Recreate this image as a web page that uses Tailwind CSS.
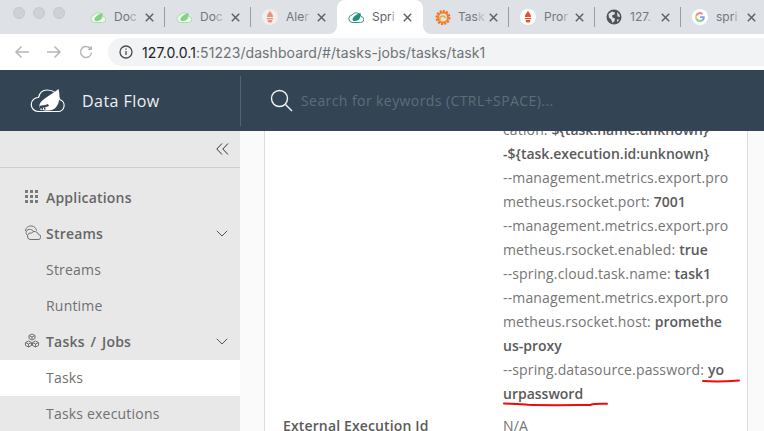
<!DOCTYPE html>
<html lang="en">
<head>
<meta charset="UTF-8" />
<title>Spring Cloud Data Flow</title>
<script src="https://cdn.jsdelivr.net/npm/@tailwindcss/browser@4"></script>
</head>
<body class="w-[764px] h-[431px] overflow-hidden bg-white font-['Open_Sans',sans-serif]">
  <!-- browser tabs -->
  <div class="h-[34px] bg-[#dee1e6] flex">
    <div class="w-[79px] flex items-center gap-[8px] pl-[13px] pb-[8px]">
      <span class="w-[12px] h-[12px] rounded-full bg-[#cfd1d4] border border-[#c6c8cb]"></span>
      <span class="w-[12px] h-[12px] rounded-full bg-[#cfd1d4] border border-[#c6c8cb]"></span>
      <span class="w-[12px] h-[12px] rounded-full bg-[#cfd1d4] border border-[#c6c8cb]"></span>
    </div>

    <div class="w-[86px] flex items-center pl-[11px] relative font-['Inter',sans-serif] text-[12px] text-[#75777b]">
      <svg class="w-[16px] h-[14px] mr-[8px] shrink-0" viewBox="0 0 16 14"><path d="M4 12.500h8.500a3 3 0 0 0 .5-6 5 5 0 0 0-9-1.500 3.800 3.800 0 0 0 0 7.500z" fill="#eef5ee" stroke="#a9dfa9" stroke-width="1"/><path d="M4.500 10c0-3.500 3.500-5.500 8-7 .5 4-1 8-5.500 8-1 0-2.500-.3-2.500-1z" fill="#86d086"/></svg>
      <span>Do<span class="text-[#a9abae]">c</span></span>
      <svg class="absolute left-[66px] top-[13px] w-[9px] h-[9px]" viewBox="0 0 9 9" stroke="#5f6368" stroke-width="1.500"><path d="M.8.800l7.400 7.400M8.200.800L.8 8.200"/></svg>
      <span class="absolute right-0 top-[7px] h-[20px] w-px bg-[#9a9da1]"></span>
    </div>
    <div class="w-[86px] flex items-center pl-[11px] relative font-['Inter',sans-serif] text-[12px] text-[#75777b]">
      <svg class="w-[16px] h-[14px] mr-[8px] shrink-0" viewBox="0 0 16 14"><path d="M4 12.500h8.500a3 3 0 0 0 .5-6 5 5 0 0 0-9-1.500 3.800 3.800 0 0 0 0 7.500z" fill="#eef5ee" stroke="#a9dfa9" stroke-width="1"/><path d="M4.500 10c0-3.500 3.500-5.500 8-7 .5 4-1 8-5.500 8-1 0-2.500-.3-2.500-1z" fill="#86d086"/></svg>
      <span>Do<span class="text-[#a9abae]">c</span></span>
      <svg class="absolute left-[66px] top-[13px] w-[9px] h-[9px]" viewBox="0 0 9 9" stroke="#5f6368" stroke-width="1.500"><path d="M.8.800l7.400 7.400M8.200.800L.8 8.200"/></svg>
      <span class="absolute right-0 top-[7px] h-[20px] w-px bg-[#9a9da1]"></span>
    </div>
    <div class="w-[86px] flex items-center pl-[11px] relative font-['Inter',sans-serif] text-[12px] text-[#75777b]">
      <svg class="w-[16px] h-[16px] mr-[8px] shrink-0" viewBox="0 0 16 16"><circle cx="8" cy="8" r="8" fill="#f1eeec"/><path d="M8 1.500c.3 2 3 3 3 6.500H5c0-3.500 2.700-4.500 3-6.500zM4.800 9h6.400v1.200H4.800zM5.500 11h5l-1 2.500h-3z" fill="#e8917c"/></svg>
      <span>Ale<span class="text-[#a9abae]">r</span></span>
      <svg class="absolute left-[66px] top-[13px] w-[9px] h-[9px]" viewBox="0 0 9 9" stroke="#5f6368" stroke-width="1.500"><path d="M.8.800l7.400 7.400M8.200.800L.8 8.200"/></svg>
    </div>
    <div class="w-[86px] flex items-center pl-[11px] relative font-['Inter',sans-serif] text-[12px] text-[#5f6368] bg-white rounded-t-[8px]">
      <span class="absolute left-[-8px] bottom-0 w-[8px] h-[8px] bg-white"><span class="block w-full h-full bg-[#dee1e6] rounded-br-[8px]"></span></span>
      <span class="absolute right-[-8px] bottom-0 w-[8px] h-[8px] bg-white"><span class="block w-full h-full bg-[#dee1e6] rounded-bl-[8px]"></span></span>
      <svg class="w-[16px] h-[14px] mr-[8px] shrink-0" viewBox="0 0 16 14"><path d="M4 12.500h8.500a3 3 0 0 0 .5-6 5 5 0 0 0-9-1.500 3.800 3.800 0 0 0 0 7.500z" fill="#fff" stroke="#2f9c8c" stroke-width="1"/><path d="M4.500 10c0-3.500 3.500-5.500 8-7 .5 4-1 8-5.500 8-1 0-2.500-.3-2.500-1z" fill="#1f8f7f"/></svg>
      <span>Spr<span class="text-[#a9abae]">i</span></span>
      <svg class="absolute left-[66px] top-[13px] w-[9px] h-[9px]" viewBox="0 0 9 9" stroke="#5f6368" stroke-width="1.500"><path d="M.8.800l7.400 7.400M8.200.800L.8 8.200"/></svg>
    </div>
    <div class="w-[86px] flex items-center pl-[12px] relative font-['Inter',sans-serif] text-[12px] text-[#75777b]">
      <svg class="w-[16px] h-[16px] mr-[7px] shrink-0" viewBox="0 0 16 16" fill="none"><circle cx="8" cy="8.500" r="6.300" stroke="#ee6f2c" stroke-width="2.400" stroke-dasharray="2 1.200"/><circle cx="8" cy="8.500" r="5" stroke="#f0822c" stroke-width="2"/><path d="M6 12.500a3 3 0 1 1 4.500-3.500" stroke="#f5a623" stroke-width="1.500"/></svg>
      <span>Tas<span class="text-[#b9bbbe]">k</span></span>
      <svg class="absolute left-[66px] top-[13px] w-[9px] h-[9px]" viewBox="0 0 9 9" stroke="#5f6368" stroke-width="1.500"><path d="M.8.800l7.400 7.400M8.200.800L.8 8.200"/></svg>
      <span class="absolute right-0 top-[7px] h-[20px] w-px bg-[#9a9da1]"></span>
    </div>
    <div class="w-[86px] flex items-center pl-[11px] relative font-['Inter',sans-serif] text-[12px] text-[#75777b]">
      <svg class="w-[16px] h-[16px] mr-[8px] shrink-0" viewBox="0 0 16 16"><circle cx="8" cy="8" r="8" fill="#fff"/><path d="M8 1.500c.3 2 3 3 3 6.500H5c0-3.500 2.700-4.500 3-6.500zM4.800 9h6.400v1.200H4.800zM5.500 11h5l-1 2.500h-3z" fill="#e2512c"/></svg>
      <span>Pro<span class="text-[#a9abae]">r</span></span>
      <svg class="absolute left-[66px] top-[13px] w-[9px] h-[9px]" viewBox="0 0 9 9" stroke="#5f6368" stroke-width="1.500"><path d="M.8.800l7.400 7.400M8.200.800L.8 8.200"/></svg>
      <span class="absolute right-0 top-[7px] h-[20px] w-px bg-[#9a9da1]"></span>
    </div>
    <div class="w-[86px] flex items-center pl-[11px] relative font-['Inter',sans-serif] text-[12px] text-[#75777b]">
      <svg class="w-[16px] h-[16px] mr-[8px] shrink-0" viewBox="0 0 16 16"><circle cx="8" cy="8" r="7.500" fill="#4f5256"/><path d="M2.500 5L6 2.500l3 1-.5 2-2.500 1 .5 2 2.500 1-.5 2.500-2 2-1.500-4-2-1zM11 3l2.500 2.500.5 2.500-2.500-.5zM11 10.500h2.500L11 13z" fill="#dee1e6"/></svg>
      <span>127<span class="text-[#a9abae]">.</span></span>
      <svg class="absolute left-[66px] top-[13px] w-[9px] h-[9px]" viewBox="0 0 9 9" stroke="#5f6368" stroke-width="1.500"><path d="M.8.800l7.400 7.400M8.200.800L.8 8.200"/></svg>
      <span class="absolute right-0 top-[7px] h-[20px] w-px bg-[#9a9da1]"></span>
    </div>
    <div class="w-[83px] flex items-center pl-[11px] relative font-['Inter',sans-serif] text-[12px] text-[#75777b]">
      <svg class="w-[16px] h-[16px] mr-[8px] shrink-0" viewBox="0 0 16 16"><circle cx="8" cy="8" r="8" fill="#fff"/><path d="M12.800 8.200c0-.4 0-.7-.1-1H8v1.900h2.700a2.300 2.300 0 0 1-1 1.500v1.200h1.600c.9-.9 1.500-2.100 1.500-3.600z" fill="#7aa7f0"/><path d="M8 13c1.300 0 2.400-.4 3.300-1.200l-1.600-1.200c-.5.300-1 .5-1.700.5-1.300 0-2.400-.9-2.800-2H3.500v1.300A5 5 0 0 0 8 13z" fill="#86cf98"/><path d="M5.200 9.100a3 3 0 0 1 0-1.900V5.800H3.500a5 5 0 0 0 0 4.600z" fill="#f5d36a"/><path d="M8 5c.7 0 1.400.3 1.900.8l1.400-1.400A5 5 0 0 0 3.500 5.800l1.700 1.400C5.600 6 6.700 5 8 5z" fill="#ee8a80"/></svg>
      <span>spr<span class="text-[#a9abae]">i</span></span>
      <svg class="absolute left-[66px] top-[13px] w-[9px] h-[9px]" viewBox="0 0 9 9" stroke="#5f6368" stroke-width="1.500"><path d="M.8.800l7.400 7.400M8.200.800L.8 8.200"/></svg>
    </div>
  </div>

  <!-- url bar -->
  <div class="h-[36px] bg-white flex items-center pl-[14px]">
    <svg class="w-[16px] h-[16px] mr-[16px] shrink-0" viewBox="0 0 16 16" fill="none" stroke="#b4b6b8" stroke-width="1.500"><path d="M15 8H2M7.500 2.500L2 8l5.500 5.500"/></svg>
    <svg class="w-[16px] h-[16px] mr-[16px] shrink-0" viewBox="0 0 16 16" fill="none" stroke="#b4b6b8" stroke-width="1.500"><path d="M1 8h13M8.500 2.500L14 8l-5.500 5.500"/></svg>
    <svg class="w-[16px] h-[16px] mr-[14px] shrink-0" viewBox="0 0 16 16" fill="none" stroke="#b4b6b8" stroke-width="1.500"><path d="M13.500 8.500a5.500 5.500 0 1 1-1.500-4.300"/><path d="M13.800 1.500v4.500H9.300z" fill="#b4b6b8" stroke="none"/></svg>
    <div class="flex-1 h-[28px] bg-[#f1f3f4] rounded-l-[14px] flex items-center pl-[11px] font-['Inter',sans-serif] text-[14px] tracking-[0.08px] text-[#6f7276] whitespace-nowrap">
      <svg class="w-[14px] h-[14px] mr-[9px] shrink-0" viewBox="0 0 14 14" fill="none" stroke="#4a4c4f" stroke-width="1.300"><circle cx="7" cy="7" r="6"/><path d="M7 6v4M7 3.500v1.300"/></svg>
      <span class="text-[#202124]">127.0.0.1</span>:51223/dashboard/#/tasks-jobs/tasks/task1
    </div>
  </div>

  <!-- app header -->
  <div class="h-[61px] bg-[#334554] flex items-center">
    <div class="w-[241px] h-[50px] flex items-center border-r border-[#55646f] pl-[29px]">
      <svg class="w-[38px] h-[26px] mr-[15px]" viewBox="0 0 38 26" fill="none"><path d="M9 23.500h20a6 6 0 0 0 2-11.700C29 6 25 2 18 2 13.500 2 10.500 5 9.500 9.500a7 7 0 0 0-.5 14z" stroke="#fff" stroke-width="1.200"/><path d="M10 20C10 11 20 9 29.500 1c2.500 9 .5 21.500-10 21.500-4 0-9.500 0-9.500-2.500z" fill="#fff"/><path d="M10.500 19c3-.5 6-.5 9-2" stroke="#334554" stroke-width="2.500"/><path d="M10 20.500h7" stroke="#334554" stroke-width="2" stroke-dasharray="1.500 1"/></svg>
      <span class="text-[16px] tracking-[0.45px] text-[#eef0f2]">Data Flow</span>
    </div>
    <svg class="w-[23px] h-[23px] ml-[29px] mr-[8px]" viewBox="0 0 23 23" fill="none" stroke="#f2f4f5" stroke-width="1.400"><circle cx="9.500" cy="9.500" r="8"/><path d="M15.500 15.500L22 22"/></svg>
    <span class="text-[14px] text-[#5d6d7a] tracking-[0.42px]">Search for keywords (CTRL+SPACE)...</span>
  </div>

  <div class="flex h-[300px] overflow-hidden">
    <!-- sidebar -->
    <div class="w-[240px] shrink-0 bg-[#e8e8e8] text-[14px] text-[#707070] tracking-[0.2px]">
      <div class="h-[37px] border-b border-[#cccccc] flex items-center justify-end pr-[11px]">
        <svg class="w-[13px] h-[12px]" viewBox="0 0 13 12" fill="none" stroke="#333" stroke-width="1"><path d="M6 .5L.8 6 6 11.500M12 .5L6.800 6 12 11.500"/></svg>
      </div>
      <div class="h-[12px]"></div>
      <div class="h-[36px] pb-[2px] flex items-center font-semibold text-[#666]">
        <svg class="w-[14px] h-[14px] ml-[25px] mr-[7px]" viewBox="0 0 14 14" fill="#7a7a7a"><rect x="0" y="0" width="3" height="3"/><rect x="5" y="0" width="3" height="3"/><rect x="10" y="0" width="3" height="3"/><rect x="0" y="5" width="3" height="3"/><rect x="5" y="5" width="3" height="3"/><rect x="10" y="5" width="3" height="3"/><rect x="0" y="10" width="3" height="3"/><rect x="5" y="10" width="3" height="3"/><rect x="10" y="10" width="3" height="3"/></svg>
        Applications
      </div>
      <div class="h-[36px] pb-[2px] flex items-center font-semibold text-[#666]">
        <svg class="w-[17px] h-[16px] ml-[24px] mr-[5px]" viewBox="0 0 17 16" fill="none" stroke="#707070"><path d="M6 14.500h8a2.500 2.500 0 0 0 .5-5 4 4 0 0 0-7-1.500 3.300 3.300 0 0 0-1.500 6.500zM3.500 10.500C.5 8 2.500 3.500 6.500 4.500c2 .3 3 1.500 3.500 2.500M1.500 6C1.500 2.500 5 .5 8 1c2.500.5 4 2 4.500 4.500"/></svg>
        <span class="flex-1">Streams</span>
        <svg class="w-[12px] h-[7px] mr-[12px]" viewBox="0 0 12 7" fill="none" stroke="#555" stroke-width="1"><path d="M.8.800L6 6l5.200-5.200"/></svg>
      </div>
      <div class="h-[36px] pb-[2px] flex items-center pl-[46px]">Streams</div>
      <div class="h-[36px] pb-[2px] flex items-center pl-[46px]">Runtime</div>
      <div class="h-[36px] pb-[2px] flex items-center font-semibold text-[#666]">
        <svg class="w-[16px] h-[16px] ml-[24px] mr-[6px]" viewBox="0 0 16 16" fill="none" stroke="#707070"><path d="M8 1l3 1.500v3L8 7 5 5.500v-3zM5 2.500l3 1.500 3-1.500M8 4v3M4.500 8l3 1.500v3L4.500 14l-3-1.500v-3zM1.500 9.500l3 1.500 3-1.500M4.500 11v3M11.500 8l3 1.500v3l-3 1.500-3-1.500v-3zM8.500 9.500l3 1.500 3-1.500M11.500 11v3"/></svg>
        <span class="flex-1 [word-spacing:2px]">Tasks / Jobs</span>
        <svg class="w-[12px] h-[7px] mr-[12px]" viewBox="0 0 12 7" fill="none" stroke="#555" stroke-width="1"><path d="M.8.800L6 6l5.200-5.200"/></svg>
      </div>
      <div class="h-[36px] pb-[2px] flex items-center pl-[46px] bg-white">Tasks</div>
      <div class="h-[36px] pb-[2px] flex items-center pl-[46px]">Tasks executions</div>
    </div>

    <!-- main content -->
    <div class="flex-1 flex bg-[#fafafa] pl-[24px] pr-[16px]">
      <div class="flex-1 bg-white border-x border-[#dddddd] pl-[238px] text-[14px] leading-[24px] text-[#757575] tracking-[0.14px] whitespace-nowrap">
        <div class="-mt-[13px]">
          <div><span>cation:</span> <b class="font-semibold text-[#5a5a5a] tracking-normal">${task.name:unknown}</b></div>
          <div class="font-semibold text-[#5a5a5a] tracking-normal">-${task.execution.id:unknown}</div>
          <div>--management.metrics.export.pro</div>
          <div>metheus.rsocket.port: <b class="font-semibold text-[#5a5a5a] tracking-normal">7001</b></div>
          <div>--management.metrics.export.pro</div>
          <div>metheus.rsocket.enabled: <b class="font-semibold text-[#5a5a5a] tracking-normal">true</b></div>
          <div>--spring.cloud.task.name: <b class="font-semibold text-[#5a5a5a] tracking-normal">task1</b></div>
          <div>--management.metrics.export.pro</div>
          <div>metheus.rsocket.host: <b class="font-semibold text-[#5a5a5a] tracking-normal">promethe</b></div>
          <div class="font-semibold text-[#5a5a5a] tracking-normal">us-proxy</div>
          <div class="relative">--spring.datasource.password: <b class="font-semibold text-[#5a5a5a] tracking-normal">yo</b>
            <svg class="absolute left-[199px] top-[20px] w-[38px] h-[5px]" viewBox="0 0 38 5" fill="none" stroke="#f00a0a" stroke-width="2" stroke-linecap="round"><path d="M1 3c10 .6 24 .4 36-.5"/></svg>
          </div>
          <div class="relative font-semibold text-[#5a5a5a] tracking-normal">urpassword
            <svg class="absolute left-0 top-[19px] w-[106px] h-[6px]" viewBox="0 0 106 6" fill="none" stroke="#f00a0a" stroke-width="2" stroke-linecap="round"><path d="M1 2.500c10 .3 18 .2 24 1.300 14 .6 30 .4 62 .2 3-1.600 9-1.200 17-1.300"/></svg>
          </div>
          <div class="relative mt-[8px]">N/A
            <span class="absolute left-[-220px] top-0 font-semibold text-[#5a5a5a]">External Execution Id</span>
          </div>
        </div>
      </div>
    </div>
  </div>
</body>
</html>
